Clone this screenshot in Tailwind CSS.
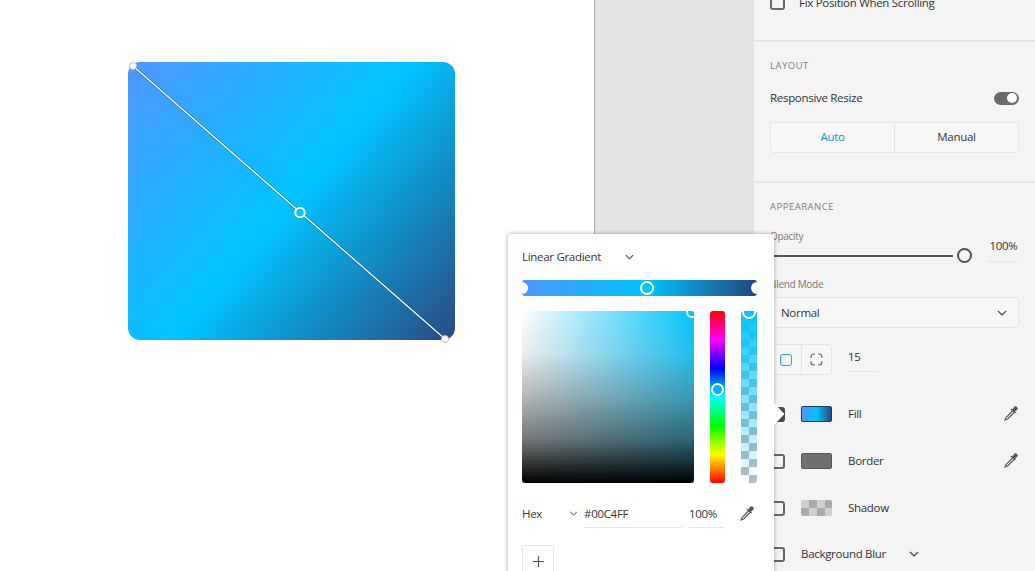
<!DOCTYPE html>
<html lang="en">
<head>
<meta charset="utf-8">
<title>Gradient editor</title>
<script src="https://cdn.jsdelivr.net/npm/@tailwindcss/browser@4"></script>
</head>
<body class="bg-white">
<div class="relative flex h-[571px] w-[1035px] overflow-hidden whitespace-nowrap font-['Open_Sans',sans-serif] text-[11.5px] tracking-[-0.3px] text-[#333]">

  <!-- canvas -->
  <div class="relative h-full w-[594px] shrink-0 bg-white">
    <div class="absolute left-[128px] top-[62px] h-[278px] w-[327px] rounded-[12px] bg-[linear-gradient(131deg,#4f96ff,#00c4ff_50%,#2a4a82)]"></div>
    <svg class="absolute left-[120px] top-[55px]" width="340" height="295" viewBox="120 55 340 295">
      <line x1="133" y1="66" x2="445" y2="339" stroke="#1d3a5c" stroke-width="2.500" opacity=".5"/>
      <line x1="133" y1="66" x2="445" y2="339" stroke="#fff" stroke-width="1.300"/>
      <circle cx="133" cy="66" r="3.500" fill="#fff" stroke="#bbb"/>
      <circle cx="445" cy="339" r="3.500" fill="#fff" stroke="#bbb"/>
      <circle cx="300" cy="212.500" r="4.800" fill="#00c4ff" stroke="#fff" stroke-width="2"/>
    </svg>
  </div>
  <div class="h-full w-[160px] shrink-0 border-l border-[#aaaaaa] bg-[#e3e3e3]"></div>

  <!-- right panel -->
  <div class="h-full flex-1 bg-[#f4f4f4]">
    <section class="flex h-[42px] flex-col border-b-2 border-[#e6e6e6] px-4">
      <div class="-mt-[5px] flex items-center gap-[14px]">
        <span class="h-[15px] w-[15px] rounded-[3px] border-2 border-[#6a6a6a]"></span>
        <span class="leading-[15px]">Fix Position When Scrolling</span>
      </div>
    </section>

    <section class="h-[141px] border-b-2 border-[#e6e6e6] px-4 pt-[17px]">
      <h2 class="text-[9.5px] leading-[14px] tracking-[0.5px] text-[#808080]">LAYOUT</h2>
      <div class="mt-[17px] flex h-[16px] items-center justify-between">
        <span>Responsive Resize</span>
        <span class="flex h-[13px] w-[25px] items-center justify-end rounded-full bg-[#6a6a6a] pr-[2px]"><span class="h-[10px] w-[10px] rounded-full bg-white"></span></span>
      </div>
      <div class="mt-[16px] flex h-[31px] rounded-[4px] border border-[#e6e6e6] bg-[#f8f8f8]">
        <button class="flex-1 border-r border-[#e6e6e6] pb-[2px] text-[#0d8ee6]">Auto</button>
        <button class="flex-1 pb-[2px]">Manual</button>
      </div>
    </section>

    <section class="px-4 pt-[17px]">
      <h2 class="text-[9.5px] leading-[14px] tracking-[0.5px] text-[#808080]">APPEARANCE</h2>
      <div class="relative mt-[15px] h-[48px]">
        <div class="text-[10px] leading-[14px] text-[#7a7a7a]">Opacity</div>
        <div class="absolute left-0 top-[26px] h-[2px] w-[183px] bg-[#555]"></div>
        <div class="absolute left-[187px] top-[19px] h-[15px] w-[15px] rounded-full border-2 border-[#555] bg-[#f4f4f4]"></div>
        <div class="absolute right-0 top-[8px] flex h-[25px] w-[31px] justify-center border-b border-[#e6e6e6] leading-[18px]">100%</div>
      </div>
      <div class="text-[10px] leading-[14px] text-[#7a7a7a]">Blend Mode</div>
      <div class="mt-[6px] flex h-[31px] items-center justify-between rounded-[4px] border border-[#e6e6e6] bg-[#f8f8f8] pl-[10px] pr-[11px]">
        <span>Normal</span>
        <svg width="10" height="6" viewBox="0 0 10 6" fill="none" stroke="#444" stroke-width="1.200"><path d="M1 1l4 4 4-4"/></svg>
      </div>
      <div class="mt-[16px] flex items-start">
        <div class="flex h-[31px] w-[62px] rounded-[4px] border border-[#e6e6e6] bg-[#f8f8f8]">
          <span class="flex flex-1 items-center justify-center border-r border-[#e6e6e6]"><span class="h-[12px] w-[12px] rounded-[3px] border-[1.500px] border-[#2a9bef]"></span></span>
          <span class="flex flex-1 items-center justify-center">
            <svg width="13" height="13" viewBox="0 0 13 13" fill="none" stroke="#666" stroke-width="1.100"><path d="M1 5V4a3 3 0 0 1 3-3h1M8 1h1a3 3 0 0 1 3 3v1M12 8v1a3 3 0 0 1-3 3H8M5 12H4a3 3 0 0 1-3-3V8"/></svg>
          </span>
        </div>
        <div class="ml-[16px] h-[28px] w-[31px] border-b border-[#e6e6e6] leading-[25px]">15</div>
      </div>

      <div class="mt-[31px] flex h-[16px] items-center">
        <span class="h-[15px] w-[15px] rounded-[3px] border-2 border-[#4a4a4a] bg-[#4a4a4a]"></span>
        <span class="ml-[16px] h-[16px] w-[31px] rounded-[2px] border border-[#1d3a5c] bg-[linear-gradient(90deg,#4f96ff,#00c4ff_50%,#2a4a82)]"></span>
        <span class="ml-[16px] flex-1">Fill</span>
        <svg class="-mt-[2px]" width="16" height="16" viewBox="0 0 16 16" fill="none"><path d="M9.500 6L3 12.500 2 15l2.500-1L11 7.500" stroke="#555" stroke-width="1.100" fill="#fff"/><path d="M7.500 4.500l1-1 1 1 1.500-2.500a2 2 0 0 1 3 3L12 6.500l1 1-1 1z" fill="#555"/></svg>
      </div>
      <div class="mt-[31px] flex h-[16px] items-center">
        <span class="h-[15px] w-[15px] rounded-[3px] border-2 border-[#666]"></span>
        <span class="ml-[16px] h-[16px] w-[31px] rounded-[2px] border border-[#555] bg-[#707070]"></span>
        <span class="ml-[16px] flex-1">Border</span>
        <svg class="-mt-[2px]" width="16" height="16" viewBox="0 0 16 16" fill="none"><path d="M9.500 6L3 12.500 2 15l2.500-1L11 7.500" stroke="#555" stroke-width="1.100" fill="#fff"/><path d="M7.500 4.500l1-1 1 1 1.500-2.500a2 2 0 0 1 3 3L12 6.500l1 1-1 1z" fill="#555"/></svg>
      </div>
      <div class="mt-[31px] flex h-[16px] items-center">
        <span class="h-[15px] w-[15px] rounded-[3px] border-2 border-[#666]"></span>
        <span class="ml-[16px] h-[16px] w-[31px] rounded-[2px] bg-[repeating-conic-gradient(#ababab_0_25%,#cfcfcf_0_50%)] bg-[length:16px_16px]"></span>
        <span class="ml-[16px] flex-1">Shadow</span>
      </div>
      <div class="mt-[30px] flex h-[16px] items-center">
        <span class="h-[15px] w-[15px] rounded-[3px] border-2 border-[#666]"></span>
        <span class="ml-[16px] w-[89px]">Background Blur</span>
        <svg class="ml-[19px]" width="10" height="6" viewBox="0 0 10 6" fill="none" stroke="#444" stroke-width="1.200"><path d="M1 1l4 4 4-4"/></svg>
      </div>
    </section>
  </div>

  <!-- colour popup -->
  <div class="absolute left-[508px] top-[234px] h-[360px] w-[266px] rounded-[3px] bg-white px-[14px] pt-[15px] shadow-[0_0_4px_rgba(0,0,0,0.35)]">
    <div class="flex h-[16px] items-center">
      <span class="w-[80px]">Linear Gradient</span>
      <svg class="ml-[23px]" width="9" height="6" viewBox="0 0 10 6" fill="none" stroke="#444" stroke-width="1.200"><path d="M1 1l4 4 4-4"/></svg>
    </div>

    <div class="relative mt-[15px] h-[16px] w-[235px] overflow-hidden rounded-[3px] bg-[linear-gradient(90deg,#4f96ff,#00c4ff_53%,#24457c)]">
      <span class="absolute -left-[6px] top-[2px] h-[12px] w-[12px] rounded-full bg-white"></span>
      <span class="absolute left-[118px] top-[1px] h-[14px] w-[14px] rounded-full border-2 border-white bg-[#00c4ff]"></span>
      <span class="absolute -right-[6px] top-[2px] h-[12px] w-[12px] rounded-full bg-white"></span>
    </div>

    <div class="mt-[15px] flex h-[172px] w-[235px]">
      <div class="relative h-full w-[172px] overflow-hidden rounded-[3px] bg-[linear-gradient(to_top,#000,rgba(60,60,60,0.7)_25%,rgba(110,110,110,0.5)_50%,rgba(160,160,160,0.2)_75%,transparent),linear-gradient(to_right,#fff,#00c4ff)]">
        <span class="absolute -top-[5px] left-[164px] h-[12px] w-[12px] rounded-full border-2 border-white bg-[#00c4ff]"></span>
      </div>
      <div class="relative ml-[16px] h-full w-[15px] rounded-[3px] bg-[linear-gradient(#ff0000,#ff00ff,#0000ff,#00ffff,#00ff00,#ffff00,#ff0000)]">
        <span class="absolute left-px top-[72px] h-[13px] w-[13px] rounded-full border-2 border-white bg-[#00b4ff]"></span>
      </div>
      <div class="relative ml-[16px] h-full w-[16px] overflow-hidden rounded-[3px] bg-[repeating-conic-gradient(#ffffff_0_25%,#bbbbbb_0_50%)] bg-[length:16px_16px] bg-bottom">
        <div class="h-full w-full bg-[linear-gradient(#00c4ff,transparent)]"></div>
        <span class="absolute -top-[6px] left-px h-[14px] w-[14px] rounded-full border-2 border-white bg-[#00c4ff]"></span>
      </div>
    </div>

    <div class="mt-[16px] flex h-[29px] items-start">
      <div class="flex h-[29px] w-[62px] items-center justify-between">
        <span>Hex</span>
        <svg class="mr-[6px]" width="9" height="5" viewBox="0 0 10 6" fill="none" stroke="#444" stroke-width="1.200"><path d="M1 1l4 4 4-4"/></svg>
      </div>
      <div class="h-[29px] w-[98px] border-b border-[#e6e6e6] leading-[29px]">#00C4FF</div>
      <div class="ml-[7px] h-[29px] w-[36px] border-b border-[#e6e6e6] leading-[29px]">100%</div>
      <svg class="ml-[14px] mt-[6px]" width="16" height="16" viewBox="0 0 16 16" fill="none"><path d="M9.500 6L3 12.500 2 15l2.500-1L11 7.500" stroke="#555" stroke-width="1.100" fill="#fff"/><path d="M7.500 4.500l1-1 1 1 1.500-2.500a2 2 0 0 1 3 3L12 6.500l1 1-1 1z" fill="#555"/></svg>
    </div>

    <button class="mt-[17px] flex h-[32px] w-[32px] items-center justify-center rounded-[2px] border border-[#e6e6e6]">
      <svg width="11" height="11" viewBox="0 0 11 11" stroke="#555" stroke-width="1.200"><path d="M5.500 0v11M0 5.500h11"/></svg>
    </button>
  </div>
  <!-- popup caret -->
  <svg class="absolute left-[773px] top-[402px]" width="12" height="24" viewBox="0 0 12 24"><path d="M0 0l11 11.500a1 1 0 0 1 0 1L0 24z" fill="#fff"/></svg>
</div>
</body>
</html>
